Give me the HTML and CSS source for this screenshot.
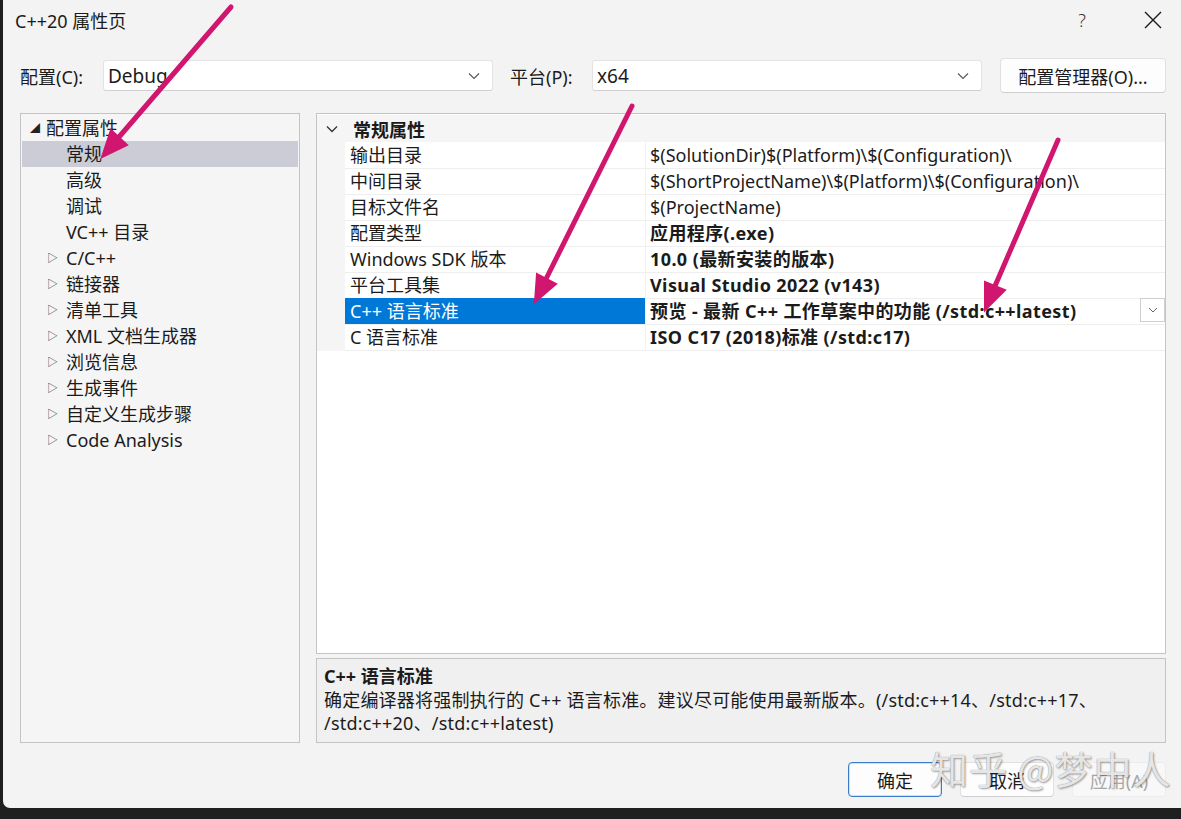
FILE: index.html
```html
<!DOCTYPE html>
<html lang="zh-CN">
<head>
<meta charset="UTF-8">
<title>C++20 属性页</title>
<link rel="stylesheet" href="styles.css">
</head>
<body>

<div class="dialog">
    <!-- Title bar -->
    <div class="titlebar">
        <span class="title">C++20 属性页</span>
        <span class="help">?</span>
        <svg class="close" width="18" height="18" viewBox="0 0 18 18"><path d="M1 1 L17 17 M17 1 L1 17" stroke="#1a1a1a" stroke-width="1.4" fill="none"/></svg>
    </div>

    <!-- Configuration / platform -->
    <div class="config-row">
        <label class="config-label">配置(C):</label>
        <div class="combo combo-config">
            <span>Debug</span>
            <svg width="12" height="8" viewBox="0 0 12 8"><path d="M1 1.5 L6 6.5 L11 1.5" stroke="#555" stroke-width="1.1" fill="none"/></svg>
        </div>
        <label class="config-label platform-label">平台(P):</label>
        <div class="combo combo-platform">
            <span>x64</span>
            <svg width="12" height="8" viewBox="0 0 12 8"><path d="M1 1.5 L6 6.5 L11 1.5" stroke="#555" stroke-width="1.1" fill="none"/></svg>
        </div>
        <button class="btn btn-manager">配置管理器(O)...</button>
    </div>

    <div class="main">
        <!-- Tree -->
        <div class="tree">
            <div class="tree-item root"><span class="tri-open">&#9698;</span>配置属性</div>
            <div class="tree-item child selected">常规</div>
            <div class="tree-item child">高级</div>
            <div class="tree-item child">调试</div>
            <div class="tree-item child">VC++ 目录</div>
            <div class="tree-item child"><span class="tri">&#9655;</span>C/C++</div>
            <div class="tree-item child"><span class="tri">&#9655;</span>链接器</div>
            <div class="tree-item child"><span class="tri">&#9655;</span>清单工具</div>
            <div class="tree-item child"><span class="tri">&#9655;</span>XML 文档生成器</div>
            <div class="tree-item child"><span class="tri">&#9655;</span>浏览信息</div>
            <div class="tree-item child"><span class="tri">&#9655;</span>生成事件</div>
            <div class="tree-item child"><span class="tri">&#9655;</span>自定义生成步骤</div>
            <div class="tree-item child"><span class="tri">&#9655;</span>Code Analysis</div>
        </div>

        <div class="right">
            <!-- Property grid -->
            <div class="grid">
                <div class="grid-head">
                    <svg class="chev" width="12" height="8" viewBox="0 0 12 8"><path d="M1 1.5 L6 6.5 L11 1.5" stroke="#333" stroke-width="1.3" fill="none"/></svg>
                    <span>常规属性</span>
                </div>
                <div class="prop-row"><span class="gut"></span><span class="name">输出目录</span><span class="val">$(SolutionDir)$(Platform)\$(Configuration)\</span></div>
                <div class="prop-row"><span class="gut"></span><span class="name">中间目录</span><span class="val">$(ShortProjectName)\$(Platform)\$(Configuration)\</span></div>
                <div class="prop-row"><span class="gut"></span><span class="name">目标文件名</span><span class="val">$(ProjectName)</span></div>
                <div class="prop-row"><span class="gut"></span><span class="name">配置类型</span><span class="val bold">应用程序(.exe)</span></div>
                <div class="prop-row"><span class="gut"></span><span class="name">Windows SDK 版本</span><span class="val bold">10.0 (最新安装的版本)</span></div>
                <div class="prop-row"><span class="gut"></span><span class="name">平台工具集</span><span class="val bold">Visual Studio 2022 (v143)</span></div>
                <div class="prop-row active"><span class="gut"></span><span class="name">C++ 语言标准</span><span class="val bold">预览 - 最新 C++ 工作草案中的功能 (/std:c++latest)
                    <span class="drop"><svg width="10" height="6" viewBox="0 0 10 6"><path d="M1 1 L5 5 L9 1" stroke="#666" stroke-width="1" fill="none"/></svg></span></span></div>
                <div class="prop-row"><span class="gut"></span><span class="name">C 语言标准</span><span class="val bold">ISO C17 (2018)标准 (/std:c17)</span></div>
            </div>

            <!-- Description -->
            <div class="desc">
                <div class="desc-title">C++ 语言标准</div>
                <div class="desc-text">确定编译器将强制执行的 C++ 语言标准。建议尽可能使用最新版本。(/std:c++14、/std:c++17、<br>/std:c++20、/std:c++latest)</div>
            </div>
        </div>
    </div>

    <div class="buttons">
        <button class="btn btn-ok">确定</button>
        <button class="btn">取消</button>
        <button class="btn btn-disabled">应用(A)</button>
    </div>
</div>

<div class="taskbar"></div>

<!-- annotations drawn over the screenshot -->
<svg class="arrows" width="1181" height="819" viewBox="0 0 1181 819">
    <g stroke="#d1166f" stroke-width="5" stroke-linecap="round" fill="#d1166f">
        <line x1="231" y1="7" x2="119" y2="137"/>
        <polygon points="102,157 127,145 111,130" stroke-width="2"/>
        <line x1="632" y1="106" x2="546" y2="279"/>
        <polygon points="535,302 556,284 537,274" stroke-width="2"/>
        <line x1="1058" y1="140" x2="995" y2="286"/>
        <polygon points="985,310 1005,290 985,282" stroke-width="2"/>
    </g>
</svg>
<div class="watermark">知乎 @梦中人</div>

</body>
</html>
```

FILE: styles.css
```css
/* Base */
body {
    margin: 0;
    width: 1181px;
    height: 819px;
    overflow: hidden;
    background-color: #1f1f1f;
    font-family: "Noto Sans", "Noto Sans CJK SC", sans-serif;
    font-size: 18px;
    color: #1b1b1b;
    position: relative;
}

/* Dialog window */
.dialog {
    margin-left: 3px;
    width: 1178px;
    height: 808px;
    background-color: #f3f3f3;
    border-bottom-left-radius: 7px;
    box-sizing: border-box;
    padding: 0 15px 0 17px;
}

.titlebar {
    height: 40px;
    display: flex;
    align-items: center;
    margin-left: -5px;
    margin-right: -8px;
}
.title {
    flex: 1;
    font-size: 18px;
}
.help {
    font-size: 18px;
    color: #333;
    margin-right: 58px;
    font-weight: 300;
}
.close {
    margin-right: 12px;
}

/* Config row */
.config-row {
    display: flex;
    align-items: center;
    height: 35px;
    margin-top: 18px;
}
.config-label {
    width: 83px;
}
.platform-label {
    margin-left: 17px;
    width: 82px;
}
.combo {
    width: 390px;
    height: 31px;
    box-sizing: border-box;
    background-color: #fff;
    border: 1px solid #e3e3e3;
    border-bottom-color: #d0d0d0;
    border-radius: 3px;
    display: flex;
    align-items: center;
    justify-content: space-between;
    padding: 0 12px 0 4px;
    font-size: 19px;
}
.btn {
    font-family: "Noto Sans", "Noto Sans CJK SC", sans-serif;
    font-size: 18px;
    color: #1b1b1b;
    background-color: #fdfdfd;
    border: 1px solid #e0e0e0;
    border-bottom-color: #cfcfcf;
    border-radius: 4px;
    height: 35px;
    width: 94px;
    padding: 0;
}
.btn-manager {
    width: 166px;
    margin-left: 18px;
}

/* Main area */
.main {
    display: flex;
    gap: 16px;
    margin-top: 20px;
    height: 630px;
}

.tree {
    width: 280px;
    box-sizing: border-box;
    border: 1px solid #c4c4c4;
    background-color: #f5f5f5;
    padding: 1px 1px 0 1px;
}
.tree-item {
    height: 26px;
    line-height: 26px;
    padding-left: 44px;
    position: relative;
    white-space: nowrap;
}
.tree-item.root {
    padding-left: 24px;
}
.tree-item.selected {
    background-color: #cbccd6;
}
.tri-open {
    position: absolute;
    left: 8px;
    font-size: 10px;
    color: #222;
}
.tri {
    position: absolute;
    left: 25px;
    font-size: 11px;
    color: #444;
}

.right {
    flex: 1;
    display: flex;
    flex-direction: column;
    gap: 4px;
}

/* Property grid */
.grid {
    height: 541px;
    box-sizing: border-box;
    border: 1px solid #c4c4c4;
    background-color: #fff;
    padding-top: 1px;
}
.grid-head {
    height: 27px;
    display: flex;
    align-items: center;
    background-color: #f5f5f5;
    font-weight: bold;
}
.grid-head .chev {
    margin: 0 15px 0 9px;
}
.prop-row {
    display: grid;
    grid-template-columns: 28px 300px 1fr;
    height: 26px;
    line-height: 26px;
    white-space: nowrap;
}
.gut {
    background-color: #f5f5f5;
}
.name {
    padding-left: 5px;
    border-bottom: 1px solid #eeeeee;
}
.val {
    padding-left: 4px;
    border-bottom: 1px solid #eeeeee;
    border-left: 1px solid #f2f2f2;
    position: relative;
}
.bold {
    font-weight: bold;
    letter-spacing: 0.4px;
}
.prop-row.active .name {
    background-color: #0078d7;
    color: #fff;
}
.drop {
    position: absolute;
    right: 0;
    top: 0;
    width: 25px;
    height: 24px;
    box-sizing: border-box;
    border: 1px solid #cfcfcf;
    background-color: #fff;
    display: flex;
    align-items: center;
    justify-content: center;
}

/* Description box */
.desc {
    height: 85px;
    box-sizing: border-box;
    border: 1px solid #c4c4c4;
    background-color: #f0f0f0;
    padding: 4px 7px 0 7px;
}
.desc-title {
    font-weight: bold;
    line-height: 26px;
}
.desc-text {
    line-height: 23px;
    letter-spacing: 0.2px;
}

/* Bottom buttons */
.buttons {
    display: flex;
    justify-content: flex-end;
    gap: 18px;
    margin-top: 19px;
}
.btn-ok {
    border: 1px solid #3d7cc9;
    box-shadow: inset 0 0 0 1px #cfe0f5;
}
.btn-disabled {
    color: #a8a8a8;
    border-color: #ececec;
    background-color: #f8f8f8;
}

.taskbar {
    height: 11px;
    background-color: #1f1f1f;
}

/* Overlays */
.arrows {
    position: absolute;
    left: 0;
    top: 0;
    pointer-events: none;
}
.watermark {
    position: absolute;
    left: 930px;
    top: 740px;
    font-family: "Noto Sans CJK SC", sans-serif;
    font-size: 38px;
    color: rgba(255, 255, 255, 0.82);
    text-shadow: 0 0 1px #777, 1px 1px 2px rgba(0, 0, 0, 0.35);
    letter-spacing: 1px;
    white-space: nowrap;
}
```
